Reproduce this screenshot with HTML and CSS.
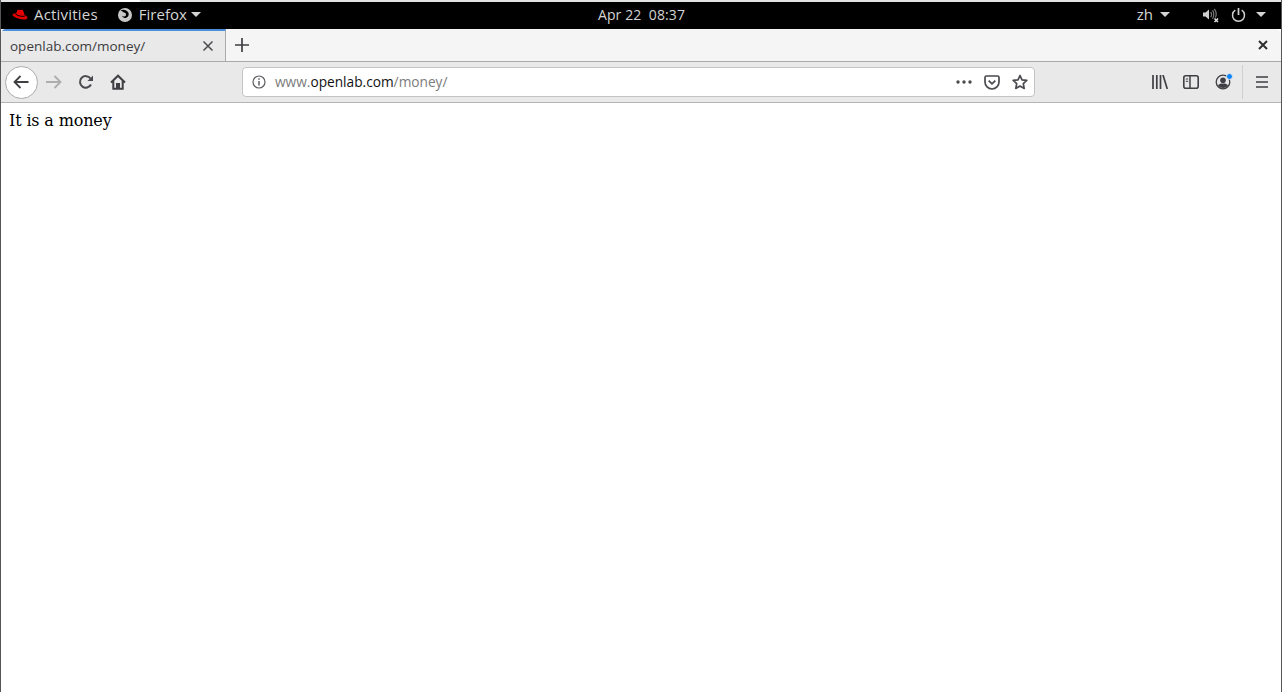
FILE: index.html
```html
<!DOCTYPE html>
<html lang="en">
<head>
<meta charset="utf-8">
<title>openlab.com/money/</title>
<link rel="stylesheet" href="styles.css">
</head>
<body>
<div class="strip"><span class="strip-tab"></span></div>
<header class="topbar">
  <div class="tb-left">
    <svg class="hat" width="16" height="12" viewBox="0 0 16 12"><path fill="#e60000" d="M4 5.500 5 2C5.300 .8 6.300 .4 7.300 .8 8 1.100 8.500 1.100 9.200 .8 10.300 .4 11 1 11.300 2L12.600 6Z"/><ellipse cx="8" cy="7.300" rx="7.700" ry="2.600" transform="rotate(14 8 7.300)" fill="#e60000"/><path fill="none" stroke="#000" stroke-width="1" d="M3.300 4.800C5 6.600 9 7.700 12.600 7.300"/></svg>
    <span class="tb-item tb-activities">Activities</span>
    <svg class="ff" width="16" height="16" viewBox="0 0 16 16"><circle cx="8" cy="8" r="7" fill="#c8c8c8"/><path fill="#000" d="M3.500 3.500C6.500 1.800 10.500 3.200 11.500 6 12.300 8.500 10.500 11 8 11 6.500 11 5.300 10 5 8.800 6 9.800 8.500 9.800 9 8 9.300 6.500 8 5.300 6.800 5.500 6.300 4.700 5 4 3.500 3.500Z"/></svg>
    <span class="tb-item">Firefox</span>
    <span class="caret"></span>
  </div>
  <div class="tb-clock">Apr 22&nbsp; 08:37</div>
  <div class="tb-right">
    <span class="tb-item">zh</span>
    <span class="caret caret-zh"></span>
    <svg class="vol" width="18" height="16" viewBox="0 0 18 16"><path fill="#d0d0d0" d="M1 5.500H3.500L7 2.500V12.500L3.500 9.500H1Z"/><path fill="none" stroke="#777" stroke-width="1.200" d="M8.700 4.800C9.800 6.500 9.800 8.500 8.700 10.200M10.500 3.200C12.200 5.500 12.200 9.500 10.500 11.800M12.300 1.800C14.500 4.800 14.500 8.500 13.200 10.500"/><path stroke="#ddd" stroke-width="1.600" d="M12.500 11.500 16 15M16 11.500 12.500 15"/></svg>
    <svg class="pow" width="15" height="16" viewBox="0 0 15 16"><path fill="none" stroke="#d0d0d0" stroke-width="1.500" d="M4.300 3.200A6 6 0 1 0 10.700 3.200"/><path stroke="#d0d0d0" stroke-width="1.700" d="M7.500 1V8"/></svg>
    <span class="caret"></span>
  </div>
</header>
<div class="tabbar">
  <div class="tab">
    <span class="tab-title">openlab.com/money/</span>
    <svg class="tab-x" width="12" height="12" viewBox="0 0 12 12"><path stroke="#4a4a4f" stroke-width="1.500" d="M1.500 1.500 10.500 10.500M10.500 1.500 1.500 10.500"/></svg>
  </div>
  <div class="newtab">
    <svg width="14" height="14" viewBox="0 0 14 14"><path stroke="#3f3f44" stroke-width="1.700" d="M7 0V14M0 7H14"/></svg>
  </div>
  <div class="tabfill">
    <svg width="10" height="10" viewBox="0 0 10 10"><path stroke="#2e2e2e" stroke-width="2" d="M1 1 9 9M9 1 1 9"/></svg>
  </div>
</div>
<nav class="navbar">
  <div class="nav-left">
    <div class="back">
      <svg width="16" height="14" viewBox="0 0 16 14"><path fill="none" stroke="#3f3f44" stroke-width="1.800" d="M15.500 7H1.500M7.500 1 1.500 7 7.500 13"/></svg>
    </div>
    <svg class="fwd" width="16" height="14" viewBox="0 0 16 14"><path fill="none" stroke="#adadad" stroke-width="1.800" d="M0 7H14.500M8.500 1 14.500 7 8.500 13"/></svg>
    <svg class="reload" width="16" height="16" viewBox="0 0 16 16"><path fill="none" stroke="#4a4a4f" stroke-width="2" d="M13 10.500A5.800 5.800 0 1 1 12.500 4.500"/><path fill="#4a4a4f" d="M15 1.500V7H9.500Z"/></svg>
    <svg class="home" width="16" height="16" viewBox="0 0 16 16"><path fill="none" stroke="#3f3f44" stroke-width="2" d="M1 8.500 8 1.700 15 8.500M3.300 7V14.800H12.700V7"/><path fill="#3f3f44" d="M6 9H10V14.800H6Z"/></svg>
  </div>
  <div class="urlbar">
    <svg class="info" width="14" height="14" viewBox="0 0 14 14"><circle cx="7" cy="7" r="6" fill="none" stroke="#5c5c61" stroke-width="1.200"/><path stroke="#5c5c61" stroke-width="1.500" d="M7 6V10.500M7 3.200V4.800"/></svg>
    <span class="url"><span class="dim">www.</span>openlab.com<span class="dim">/money/</span></span>
    <svg class="dots" width="16" height="4" viewBox="0 0 16 4"><circle cx="2" cy="2" r="1.700" fill="#4a4a4f"/><circle cx="8" cy="2" r="1.700" fill="#4a4a4f"/><circle cx="14" cy="2" r="1.700" fill="#4a4a4f"/></svg>
    <svg class="pocket" width="16" height="15" viewBox="0 0 16 15"><path fill="none" stroke="#4a4a4f" stroke-width="1.700" d="M2.500 1H13.500C14.500 1 15 1.500 15 2.500V7A7 7 0 0 1 1 7V2.500C1 1.500 1.500 1 2.500 1Z"/><path fill="none" stroke="#4a4a4f" stroke-width="1.800" d="M4.700 5.700 8 8.800 11.300 5.700"/></svg>
    <svg class="star" width="16" height="16" viewBox="0 0 16 16"><path fill="none" stroke="#4a4a4f" stroke-width="1.700" stroke-linejoin="round" d="M8 1.500 10 5.800 14.800 6.400 11.300 9.600 12.200 14.400 8 12 3.800 14.400 4.700 9.600 1.200 6.400 6 5.800Z"/></svg>
  </div>
  <div class="nav-right">
    <svg class="lib" width="16" height="14" viewBox="0 0 16 14"><path stroke="#3f3f44" stroke-width="1.700" d="M1 0V14M4.800 0V14M8.500 0V14M11 0 15.300 14"/></svg>
    <svg class="side" width="16" height="14" viewBox="0 0 16 14"><rect x=".8" y=".8" width="14.400" height="12.400" rx="2" fill="none" stroke="#3f3f44" stroke-width="1.600"/><path stroke="#3f3f44" stroke-width="1.500" d="M7 1V13"/><path stroke="#3f3f44" d="M2.800 4H5.200M2.800 6.300H5.200"/></svg>
    <div class="acct">
      <svg width="16" height="16" viewBox="0 0 16 16"><circle cx="8" cy="8" r="6.800" fill="none" stroke="#3f3f44" stroke-width="1.300"/><circle cx="8" cy="6.300" r="2.800" fill="#3f3f44"/><path fill="#3f3f44" d="M3 11.500C4 9.800 6 9.500 8 9.500S12 9.800 13 11.500C12 13 10 14 8 14S4 13 3 11.500Z"/></svg>
      <span class="acct-dot"></span>
    </div>
    <span class="sep"></span>
    <svg class="menu" width="12" height="12" viewBox="0 0 12 12"><path stroke="#3f3f44" stroke-width="1.700" d="M0 1H12M0 6H12M0 11H12"/></svg>
  </div>
</nav>
<main class="page">It is a money</main>
</body>
</html>
```
FILE: styles.css
```css
* { box-sizing: border-box; }
html, body { margin: 0; height: 100%; overflow: hidden; }
body {
  width: 1282px;
  height: 692px;
  background: #fff;
  border-left: 1px solid #555;
  border-right: 1px solid #555;
  display: flex;
  flex-direction: column;
  font-family: "Open Sans", "Noto Sans", sans-serif;
}
.strip { height: 2px; background: #e2e2e2; flex: none; }
.strip-tab { display: block; width: 70px; height: 2px; margin-left: 69px; background: #fff; }
svg { display: block; flex: none; }

.topbar {
  height: 27px;
  flex: none;
  padding-bottom: 2px;
  background: #000;
  color: #d4d4d4;
  display: grid;
  grid-template-columns: 1fr auto 1fr;
  align-items: center;
  font-size: 14px;
  font-weight: 500;
}
.tb-item { font-size: 15px; margin-top: -2px; }
.tb-left, .tb-right { display: flex; align-items: center; }
.tb-left { padding-left: 11px; }
.tb-right { justify-content: flex-end; padding-right: 15px; }
.tb-clock { margin-left: 1px; letter-spacing: .1px; }
.tb-activities { margin-left: 6px; margin-right: 19px; letter-spacing: .2px; }
.ff { margin-right: 6px; }
.caret {
  width: 0;
  height: 0;
  margin-left: 4px;
  border: 5px solid transparent;
  border-top: 5px solid #d4d4d4;
  border-bottom: 0;
}
.caret-zh { margin-left: 7px; margin-right: 32px; }
.vol { margin-right: 11px; }
.pow { margin-right: 6px; }

.tabbar {
  height: 33px;
  flex: none;
  display: flex;
  background: #f5f5f5;
  border-bottom: 1px solid #aaa;
  border-top-left-radius: 5px;
  border-top-right-radius: 5px;
  overflow: hidden;
}
.tab {
  width: 225px;
  height: 33px;
  flex: none;
  display: flex;
  align-items: center;
  justify-content: space-between;
  padding: 0 11px 2px 9px;
  background: #e9e9e9;
  border-top: 2px solid #4a90d9;
  border-right: 1px solid #aaa;
  color: #3c3c40;
  font-size: 13.5px;
}
.newtab { width: 32px; display: flex; align-items: center; justify-content: center; }
.tabfill { flex: 1; display: flex; align-items: center; justify-content: flex-end; padding-right: 13px; }

.navbar {
  height: 41px;
  flex: none;
  display: flex;
  align-items: center;
  background: #e9e9e9;
  border-bottom: 1px solid #b5b5b5;
}
.nav-left { width: 241px; flex: none; display: flex; align-items: center; padding-left: 3.5px; }
.back {
  width: 33px;
  height: 33px;
  border: 1px solid #ababab;
  border-radius: 50%;
  background: #fff;
  display: flex;
  align-items: center;
  justify-content: center;
}
.fwd { margin-left: 8.5px; }
.reload { margin-left: 16px; }
.home { margin-left: 16px; }

.urlbar {
  width: 793px;
  height: 30px;
  flex: none;
  display: flex;
  align-items: center;
  padding: 0 6px 0 9px;
  background: #fff;
  border: 1px solid #c4c4c4;
  border-radius: 4px;
}
.url { flex: 1; margin: -2px 0 0 9px; font-size: 13.7px; color: #111; }
.dim { color: #7c7c7c; }
.dots { margin-right: 12px; }
.pocket { margin-right: 12px; }

.nav-right { flex: 1; display: flex; align-items: center; padding-left: 117px; }
.side { margin-left: 15px; }
.acct { position: relative; margin-left: 16px; }
.acct-dot {
  position: absolute;
  top: -1px;
  right: -2px;
  width: 7px;
  height: 7px;
  border-radius: 50%;
  background: #0a84ff;
  border: 1px solid #e9e9e9;
}
.sep { width: 1px; height: 34px; background: #cfcfcf; margin-left: 11px; }
.menu { margin-left: 13px; }

.page {
  flex: 1;
  padding: 8px;
  font-family: "DejaVu Serif", serif;
  font-size: 16px;
  letter-spacing: -.15px;
  color: #000;
}
```
